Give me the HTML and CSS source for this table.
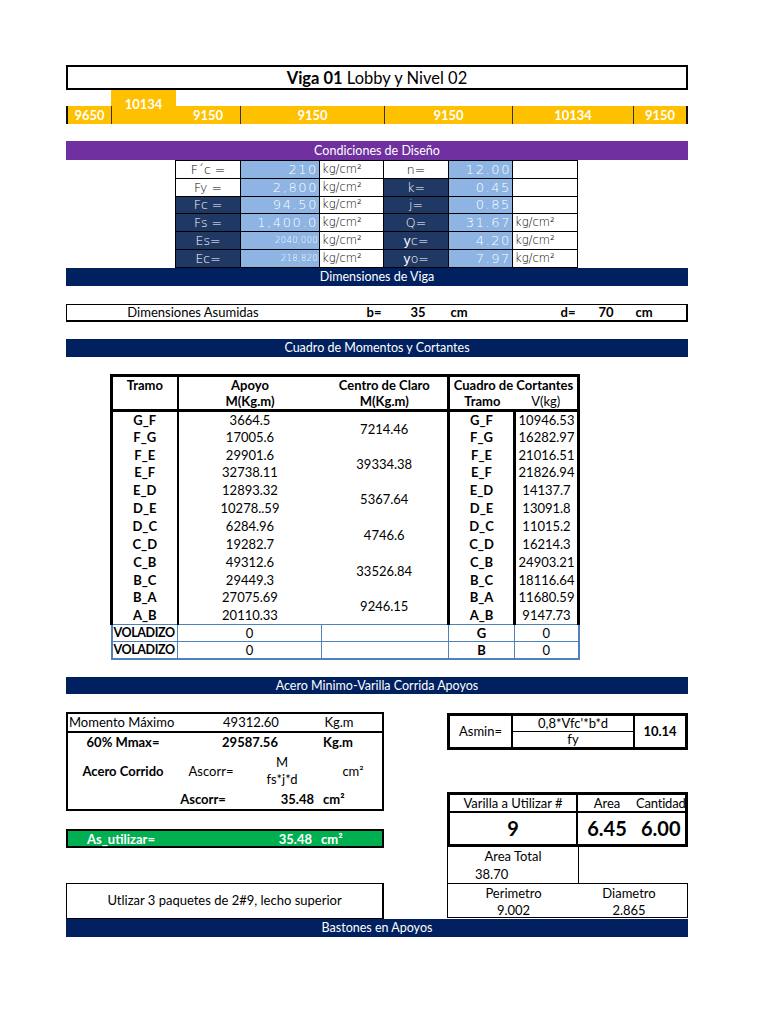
FILE: index.html
```html
<!DOCTYPE html>
<html lang="es">
<head>
<meta charset="utf-8">
<title>Viga 01 Lobby y Nivel 02</title>
<link rel="stylesheet" href="styles.css">
</head>
<body>
<div class="sheet">
  <div class="title"><b>Viga 01</b>&nbsp;Lobby y Nivel 02</div>

  <div class="beam">
    <div class="seg first">9650</div>
    <div class="seg raised">10134</div>
    <div class="seg nob">9150</div>
    <div class="seg">9150</div>
    <div class="seg">9150</div>
    <div class="seg">10134</div>
    <div class="seg last">9150</div>
  </div>

  <div class="bar purple">Condiciones de Diseño</div>

  <table class="cond">
    <colgroup><col class="w65"><col class="w79"><col class="w64"><col class="w65"><col class="w64"><col class="w65"></colgroup>
    <tr><td class="lw">F´c =</td><td class="val">210</td><td class="unit">kg/cm²</td><td class="lw">n=</td><td class="val">12.00</td><td class="unit"></td></tr>
    <tr><td class="lw">Fy =</td><td class="val">2,800</td><td class="unit">kg/cm²</td><td class="ld">k=</td><td class="val">0.45</td><td class="unit"></td></tr>
    <tr><td class="ld">Fc =</td><td class="val">94.50</td><td class="unit">kg/cm²</td><td class="ld">j=</td><td class="val">0.85</td><td class="unit"></td></tr>
    <tr><td class="ld">Fs =</td><td class="val">1,400.0</td><td class="unit">kg/cm²</td><td class="ld">Q=</td><td class="val">31.67</td><td class="unit">kg/cm²</td></tr>
    <tr><td class="ld">Es=</td><td class="val small">2040,000</td><td class="unit">kg/cm²</td><td class="ld"><b>y</b>c=</td><td class="val">4.20</td><td class="unit">kg/cm²</td></tr>
    <tr><td class="ld">Ec=</td><td class="val small">218,820</td><td class="unit">kg/cm²</td><td class="ld"><b>y</b>o=</td><td class="val">7.97</td><td class="unit">kg/cm²</td></tr>
  </table>

  <div class="bar navy">Dimensiones de Viga</div>

  <div class="dims">
    <span class="d1">Dimensiones Asumidas</span>
    <span class="d2"><b>b=</b></span>
    <span class="d3"><b>35</b></span>
    <span class="d4"><b>cm</b></span>
    <span class="d5"><b>d=</b></span>
    <span class="d6"><b>70</b></span>
    <span class="d7"><b>cm</b></span>
  </div>

  <div class="bar navy mt17">Cuadro de Momentos y Cortantes</div>

  <table class="mom">
    <colgroup><col class="c1"><col class="c2"><col class="c3"><col class="c4"><col class="c5"></colgroup>
    <tr class="h1"><th class="tr1">Tramo</th><th>Apoyo</th><th class="cc">Centro de Claro</th><th colspan="2" class="cc2">Cuadro de Cortantes</th></tr>
    <tr class="h2"><th class="tr1"></th><th>M(Kg.m)</th><th class="cc">M(Kg.m)</th><th>Tramo</th><th class="nb">V(kg)</th></tr>
    <tr><td class="t">G_F</td><td>3664.5</td><td class="cc" rowspan="2">7214.46</td><td class="t2">G_F</td><td class="v">10946.53</td></tr>
    <tr><td class="t">F_G</td><td>17005.6</td><td class="t2">F_G</td><td class="v">16282.97</td></tr>
    <tr><td class="t">F_E</td><td>29901.6</td><td class="cc" rowspan="2">39334.38</td><td class="t2">F_E</td><td class="v">21016.51</td></tr>
    <tr><td class="t">E_F</td><td>32738.11</td><td class="t2">E_F</td><td class="v">21826.94</td></tr>
    <tr><td class="t">E_D</td><td>12893.32</td><td class="cc" rowspan="2">5367.64</td><td class="t2">E_D</td><td class="v">14137.7</td></tr>
    <tr><td class="t">D_E</td><td>10278..59</td><td class="t2">D_E</td><td class="v">13091.8</td></tr>
    <tr><td class="t">D_C</td><td>6284.96</td><td class="cc" rowspan="2">4746.6</td><td class="t2">D_C</td><td class="v">11015.2</td></tr>
    <tr><td class="t">C_D</td><td>19282.7</td><td class="t2">C_D</td><td class="v">16214.3</td></tr>
    <tr><td class="t">C_B</td><td>49312.6</td><td class="cc" rowspan="2">33526.84</td><td class="t2">C_B</td><td class="v">24903.21</td></tr>
    <tr><td class="t">B_C</td><td>29449.3</td><td class="t2">B_C</td><td class="v">18116.64</td></tr>
    <tr><td class="t">B_A</td><td>27075.69</td><td class="cc" rowspan="2">9246.15</td><td class="t2">B_A</td><td class="v">11680.59</td></tr>
    <tr class="lastrow"><td class="t">A_B</td><td>20110.33</td><td class="t2">A_B</td><td class="v">9147.73</td></tr>
    <tr class="vol"><td class="vz">VOLADIZO</td><td>0</td><td></td><td><b>G</b></td><td>0</td></tr>
    <tr class="vol"><td class="vz">VOLADIZO</td><td>0</td><td></td><td><b>B</b></td><td>0</td></tr>
  </table>

  <div class="bar navy mt17 h17">Acero Minimo-Varilla Corrida Apoyos</div>

  <div class="lower">
    <div class="leftcol">
      <div class="acbox">
        <div class="r1"><span>Momento Máximo</span><span class="ctr">49312.60</span><span></span><span class="ctr">Kg.m</span></div>
        <div class="r2"><b class="ctr">60% Mmax=</b><span></span><b class="ctr">29587.56</b><span></span><b class="ctr">Kg.m</b></div>
        <div class="r3"><b class="ctr">Acero Corrido</b><span></span><span class="ctr">Ascorr=</span><span></span><span class="frac"><span>M</span><span>fs*j*d</span></span><span></span><span class="ctr">cm²</span></div>
        <div class="r4"><span></span><b class="ctr">Ascorr=</b><span></span><b class="rt">35.48</b><span></span><b>cm²</b></div>
      </div>
      <div class="green"><span></span><span>As_utilizar=</span><span class="rt">35.48</span><span></span><span>cm²</span></div>
      <div class="note">Utlizar 3 paquetes de 2#9, lecho superior</div>
    </div>
    <div class="rightcol">
      <div class="asmin">
        <div class="am-l">Asmin=</div>
        <div class="am-f"><span class="num">0,8*Vfc'*b*d</span><span>fy</span></div>
        <div class="am-v">10.14</div>
      </div>
      <div class="varilla">
        <div class="vh1">Varilla a Utilizar #</div>
        <div class="vh2"><span class="area">Area</span><span class="cant">Cantidad</span></div>
        <div class="vv1">9</div>
        <div class="vv2"><span class="area">6.45</span><span class="cant">6.00</span></div>
      </div>
      <div class="atotal">
        <div class="at-cell"><span class="at-h">Area Total</span><span class="at-v">38.70</span></div>
      </div>
      <div class="perim">
        <div class="pcol"><span>Perimetro</span><span>9.002</span></div>
        <div class="pcol"><span>Diametro</span><span>2.865</span></div>
      </div>
    </div>
  </div>

  <div class="bar navy">Bastones en Apoyos</div>
</div>
</body>
</html>
```

FILE: styles.css
```css
* { box-sizing: border-box; }
html, body { margin: 0; padding: 0; background: #fff; }
body { font-family: "Lato", "Liberation Sans", sans-serif; font-size: 13px; color: #000; }

.sheet { margin-left: 66px; width: 622px; padding-top: 65px; }

.title {
  height: 25px; border: 2px solid #000;
  display: flex; align-items: center; justify-content: center;
  font-size: 16.5px;
}
.title b { font-weight: 700; }

.beam {
  display: grid;
  grid-template-columns: 45px 65px 64px 144px 128px 121px 55px;
  grid-template-rows: 16px 18px;
}
.seg {
  grid-row: 2; background: #FFC000; color: #fff; font-weight: 700; font-size: 13px;
  display: flex; align-items: center; justify-content: center;
  border-left: 1px solid #333;
}
.seg.first { border-left: 2px solid #111; }
.seg.last { border-right: 2px solid #111; }
.seg.nob { border-left: none; }
.seg.raised {
  grid-row: 1 / 3; grid-column: 2; border-left: none;
  align-items: flex-start; padding-top: 6px;
  background: linear-gradient(#333, #333) left bottom / 1px 18px no-repeat, #FFC000;
}

.bar {
  height: 18px; color: #fff; font-size: 12.5px;
  display: flex; align-items: center; justify-content: center;
}
.purple { background: #7030A0; margin-top: 17px; height: 19px; }
.navy { background: #002060; }
.mt17 { margin-top: 17px; }
.h17 { height: 17px; }

.cond {
  margin-left: 109px; width: 402px; border-collapse: collapse; table-layout: fixed;
  font-family: "DejaVu Sans", sans-serif; font-size: 11px;
}
.cond .w65 { width: 65px; } .cond .w79 { width: 79px; } .cond .w64 { width: 64px; }
.cond td { border: 1px solid #000; padding: 0 3px; height: 17.75px; line-height: 15px; white-space: nowrap; overflow: hidden; }
.cond .lw { background: #fff; color: #000; text-align: center; font-size: 12.5px; font-weight: 200; }
.cond .ld { background: #203864; color: #fff; text-align: center; font-size: 12.5px; font-weight: 200; }
.cond .val { background: #8DB4E2; color: #fff; text-align: right; font-size: 13px; letter-spacing: 1.6px; font-weight: 200; padding-right: 1px; }
.cond .val.small { font-size: 8.5px; letter-spacing: 0.3px; }
.cond .unit { background: #fff; color: #000; text-align: left; padding-left: 2px; font-size: 11.5px; font-weight: 200; }

.dims {
  margin-top: 18px; height: 18px; border: 1px solid #000; border-bottom-width: 2px; border-right-width: 2px;
  display: grid; align-items: center;
  grid-template-columns: 252px 37px 36px 8px 36px 5px 36px 73px 36px 2px 36px 2px 36px 1fr;
}
.dims span { text-align: center; line-height: 15px; }
.dims b { font-weight: 700; }
.d1 { grid-column: 1; } .d2 { grid-column: 3; } .d3 { grid-column: 5; } .d4 { grid-column: 7; }
.d5 { grid-column: 9; } .d6 { grid-column: 11; } .d7 { grid-column: 13; }

.mom {
  margin-top: 17px; margin-left: 44px; width: 467px;
  border-collapse: collapse; table-layout: fixed;
}
.mom .c1 { width: 66px; } .mom .c2 { width: 144px; } .mom .c3 { width: 127px; } .mom .c4 { width: 66px; } .mom .c5 { width: 64px; }
.mom th, .mom td { padding: 0; text-align: center; white-space: nowrap; }
.mom th { font-weight: 700; height: 17.5px; line-height: 16px; vertical-align: middle; }
.mom tr.h1 th { border-top: 3px solid #000; }
.mom tr.h2 th { border-bottom: 3px solid #000; }
.mom th.nb { font-weight: 400; }
.mom tr.h1 th:first-child, .mom tr.h2 th:first-child { border-left: 3px solid #000; border-right: 2px solid #000; }
.mom th.cc { border-right: 3px solid #000; }
.mom th.cc2, .mom th.nb { border-right: 3px solid #000; }
.mom td { height: 17.85px; line-height: 16px; }
.mom td.t { font-weight: 700; border-left: 3px solid #000; border-right: 2px solid #000; }
.mom td.cc { border-right: 3px solid #000; vertical-align: middle; }
.mom td.t2 { font-weight: 700; border-right: 3px solid #000; }
.mom td.v { border-right: 3px solid #000; }
.mom tr.vol td { border: 1px solid #4F81BD; height: 17px; }
.mom tr.vol td:first-child { border-left: 2px solid #4F81BD; }
.mom tr.vol td:last-child { border-right: 2px solid #4F81BD; }
.mom tr.vol:last-child td { border-bottom: 2px solid #4F81BD; }
.mom td.vz { font-weight: 700; font-size: 12.5px; letter-spacing: -0.4px; text-align: left; padding-left: 1px; }

.lower { display: flex; }
.leftcol { width: 318px; padding-top: 18px; display: flex; flex-direction: column; }
.rightcol { width: 241px; margin-left: 63px; padding-top: 19px; display: flex; flex-direction: column; }

.ctr { text-align: center; }
.rt { text-align: right; }

.acbox { height: 99px; border: 2px solid #000; display: flex; flex-direction: column; }
.acbox > div { display: grid; align-items: center; }
.r1 { height: 19px; border-bottom: 2px solid #000; grid-template-columns: 140px 84px 20px 52px 1fr; padding-left: 1px; }
.r2 { height: 18px; grid-template-columns: 110px 30px 84px 20px 52px 1fr; }
.r3 { height: 40px; grid-template-columns: 110px 3px 60px 11px 60px 16px 50px 1fr; }
.r4 { height: 16px; grid-template-columns: 100px 70px 20px 56px 9px 1fr; }
.frac { display: flex; flex-direction: column; align-items: center; line-height: 17px; }
.acbox b { font-weight: 700; }

.green {
  margin-top: 18px; height: 19px; background: #00B050; color: #fff; font-weight: 700;
  border: 2px solid #000; display: grid; align-items: center;
  grid-template-columns: 19px 169px 56px 9px 1fr;
}
.note {
  margin-top: 35px; height: 36px; border: 1px solid #000; border-right-width: 2px;
  display: flex; align-items: center; justify-content: center; padding-bottom: 1px;
}

.asmin {
  height: 37px; border: 3px solid #000; display: grid;
  grid-template-columns: 63px 122px 1fr;
}
.am-l { display: flex; align-items: center; justify-content: center; border-right: 2px solid #000; }
.am-f { display: flex; flex-direction: column; border-right: 2px solid #000; }
.am-f span { flex: 1; display: flex; align-items: center; justify-content: center; line-height: 14px; }
.am-f .num { border-bottom: 1px solid #000; }
.am-v { display: flex; align-items: center; justify-content: center; font-weight: 700; }

.varilla {
  margin-top: 42px; height: 55px; border: 3px solid #000;
  display: grid; grid-template-columns: 128px 1fr; grid-template-rows: 18px 1fr;
}
.vh1, .vh2 { border-bottom: 2px solid #000; display: flex; align-items: center; }
.vh1 { justify-content: center; border-right: 2px solid #000; }
.vv1 { display: flex; align-items: center; justify-content: center; border-right: 2px solid #000; font-weight: 700; font-size: 20px; }
.vh2 .area, .vv2 .area { width: 58px; text-align: center; }
.vh2 .cant, .vv2 .cant { flex: 1; text-align: center; }
.vh2 .cant { letter-spacing: -0.2px; text-align: right; }
.vv2 { display: flex; align-items: center; font-weight: 700; font-size: 20px; }

.atotal { height: 36px; display: flex; }
.at-cell { width: 132px; border-left: 1px solid #000; border-right: 1px solid #000; display: flex; flex-direction: column; }
.at-h { text-align: center; line-height: 18px; height: 18px; }
.at-v { padding-left: 27px; line-height: 18px; height: 18px; }

.perim { height: 35px; border: 1px solid #000; display: grid; grid-template-columns: 131px 1fr; }
.pcol { display: flex; flex-direction: column; align-items: center; line-height: 16px; padding-top: 1px; }
.pcol span { height: 17px; }
.perim .pcol:last-child { padding-right: 8px; }
```
